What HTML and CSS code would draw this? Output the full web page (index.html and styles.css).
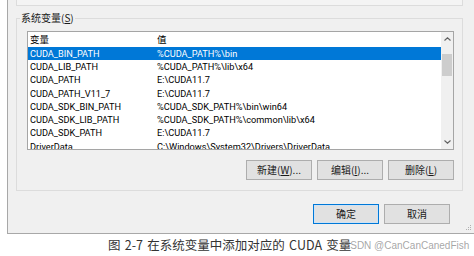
FILE: index.html
```html
<!DOCTYPE html>
<html lang="zh-CN">
<head>
<meta charset="utf-8">
<title>系统变量</title>
<link rel="stylesheet" href="styles.css">
</head>
<body>
<div class="window">
  <div class="prev-group"></div>
  <fieldset class="group">
    <legend>系统变量(<u>S</u>)</legend>
    <div class="list">
      <div class="rows">
        <div class="row head"><span class="c1">变量</span><span class="c2">值</span></div>
        <div class="row sel"><span class="c1">CUDA_BIN_PATH</span><span class="c2">%CUDA_PATH%\bin</span></div>
        <div class="row"><span class="c1">CUDA_LIB_PATH</span><span class="c2">%CUDA_PATH%\lib\x64</span></div>
        <div class="row"><span class="c1">CUDA_PATH</span><span class="c2">E:\CUDA11.7</span></div>
        <div class="row"><span class="c1">CUDA_PATH_V11_7</span><span class="c2">E:\CUDA11.7</span></div>
        <div class="row"><span class="c1">CUDA_SDK_BIN_PATH</span><span class="c2">%CUDA_SDK_PATH%\bin\win64</span></div>
        <div class="row"><span class="c1">CUDA_SDK_LIB_PATH</span><span class="c2">%CUDA_SDK_PATH%\common\lib\x64</span></div>
        <div class="row"><span class="c1">CUDA_SDK_PATH</span><span class="c2">E:\CUDA11.7</span></div>
        <div class="row"><span class="c1">DriverData</span><span class="c2">C:\Windows\System32\Drivers\DriverData</span></div>
      </div>
      <div class="scrollbar">
        <div class="arrow"><svg width="7" height="4" viewBox="0 0 7 4"><path d="M0.5 3.5 L3.5 0.8 L6.5 3.5" fill="none" stroke="#606060" stroke-width="1.1"/></svg></div>
        <div class="track"><div class="thumb"></div></div>
        <div class="arrow"><svg width="7" height="4" viewBox="0 0 7 4"><path d="M0.5 0.5 L3.5 3.2 L6.5 0.5" fill="none" stroke="#606060" stroke-width="1.1"/></svg></div>
      </div>
    </div>
    <div class="btns">
      <button>新建(<u>W</u>)...</button>
      <button>编辑(<u>I</u>)...</button>
      <button>删除(<u>L</u>)</button>
    </div>
  </fieldset>
  <div class="btns main">
    <button class="default">确定</button>
    <button>取消</button>
  </div>
  <svg class="grip" width="6" height="6" viewBox="0 0 6 6"><g fill="#b0b0b0"><rect x="4" y="0" width="1" height="1"/><rect x="2" y="2" width="1" height="1"/><rect x="4" y="2" width="1" height="1"/><rect x="0" y="4" width="1" height="1"/><rect x="2" y="4" width="1" height="1"/><rect x="4" y="4" width="1" height="1"/></g></svg>
</div>
<div class="caption">图 2-7 在系统变量中添加对应的 CUDA 变量<span class="wm">CSDN @CanCanCanedFish</span></div>
</body>
</html>
```
FILE: styles.css
```css
html, body {
  margin: 0;
  padding: 0;
}
body {
  width: 474px;
  height: 256px;
  overflow: hidden;
  background: #ffffff;
  font-family: "Noto Sans CJK SC", "Liberation Sans", sans-serif;
  color: #000;
}
.window {
  position: relative;
  box-sizing: border-box;
  margin-left: 7px;
  width: 467px;
  height: 234px;
  background: #f0f0f0;
  border-left: 1px solid #a8a8a8;
  border-bottom: 1px solid #a8a8a8;
  display: flex;
  flex-direction: column;
}
.prev-group {
  box-sizing: border-box;
  margin-left: 8px;
  width: 447px;
  height: 6px;
  border: 1px solid #dcdcdc;
  border-top: none;
  background: #f4f4f4;
}
.group {
  box-sizing: border-box;
  margin: 6px 0 0 8px;
  width: 447px;
  padding: 0 8px 10px 10px;
  border: 1px solid #dcdcdc;
  min-width: 0;
}
.group legend {
  margin-left: -7px;
  padding: 0 1px;
  font-size: 10px;
  line-height: 12px;
  color: #1a1a1a;
}
.list {
  box-sizing: border-box;
  margin-top: 7px;
  height: 119px;
  border: 1px solid #a5a5a5;
  background: #fff;
  display: flex;
  overflow: hidden;
}
.rows {
  flex: 1;
  overflow: hidden;
}
.row {
  display: flex;
  height: 13.3px;
  line-height: 13.3px;
  font-family: Roboto, "Noto Sans CJK SC", sans-serif;
  font-size: 9.2px;
  white-space: nowrap;
  color: #000;
}
.row.head {
  height: 14.7px;
  line-height: 14.7px;
  font-family: "Noto Sans CJK SC", sans-serif;
  font-size: 9.5px;
}
.row.sel {
  background: #0078d7;
  color: #fff;
}
.c1 {
  box-sizing: border-box;
  width: 129px;
  padding-left: 2px;
  flex: none;
}
.c2 {
  flex: none;
}
.scrollbar {
  width: 12px;
  flex: none;
  background: #f0f0f0;
  display: flex;
  flex-direction: column;
}
.arrow {
  height: 14px;
  display: flex;
  align-items: center;
  justify-content: center;
}
.track {
  flex: 1;
}
.thumb {
  margin: 8px 1px 0 1px;
  height: 22px;
  background: #cdcdcd;
}
.btns {
  display: flex;
  justify-content: flex-end;
  gap: 5px;
  margin-top: 10px;
}
.btns button {
  box-sizing: border-box;
  width: 66px;
  height: 20px;
  padding: 0;
  margin: 0;
  background: #e1e1e1;
  border: 1px solid #adadad;
  font-family: "Noto Sans CJK SC", "Liberation Sans", sans-serif;
  font-size: 10px;
  line-height: 18px;
  color: #1a1a1a;
}
.btns.main {
  margin-top: 13px;
  padding-right: 24px;
}
.btns button.default {
  border: 1px solid #0078d7;
  box-shadow: inset 0 0 0 1px #cfe3f5;
}
.grip {
  position: absolute;
  right: 2px;
  bottom: 2px;
}
.caption {
  position: relative;
  height: 22px;
  padding-left: 108px;
  font-size: 12.5px;
  line-height: 22px;
  word-spacing: 1.5px;
  color: #333;
  white-space: nowrap;
}
.wm {
  position: absolute;
  left: 343px;
  top: 1px;
  font-family: "Liberation Sans", sans-serif;
  font-size: 10px;
  line-height: 22px;
  word-spacing: 0;
  color: rgba(150, 150, 150, 0.85);
}
```
